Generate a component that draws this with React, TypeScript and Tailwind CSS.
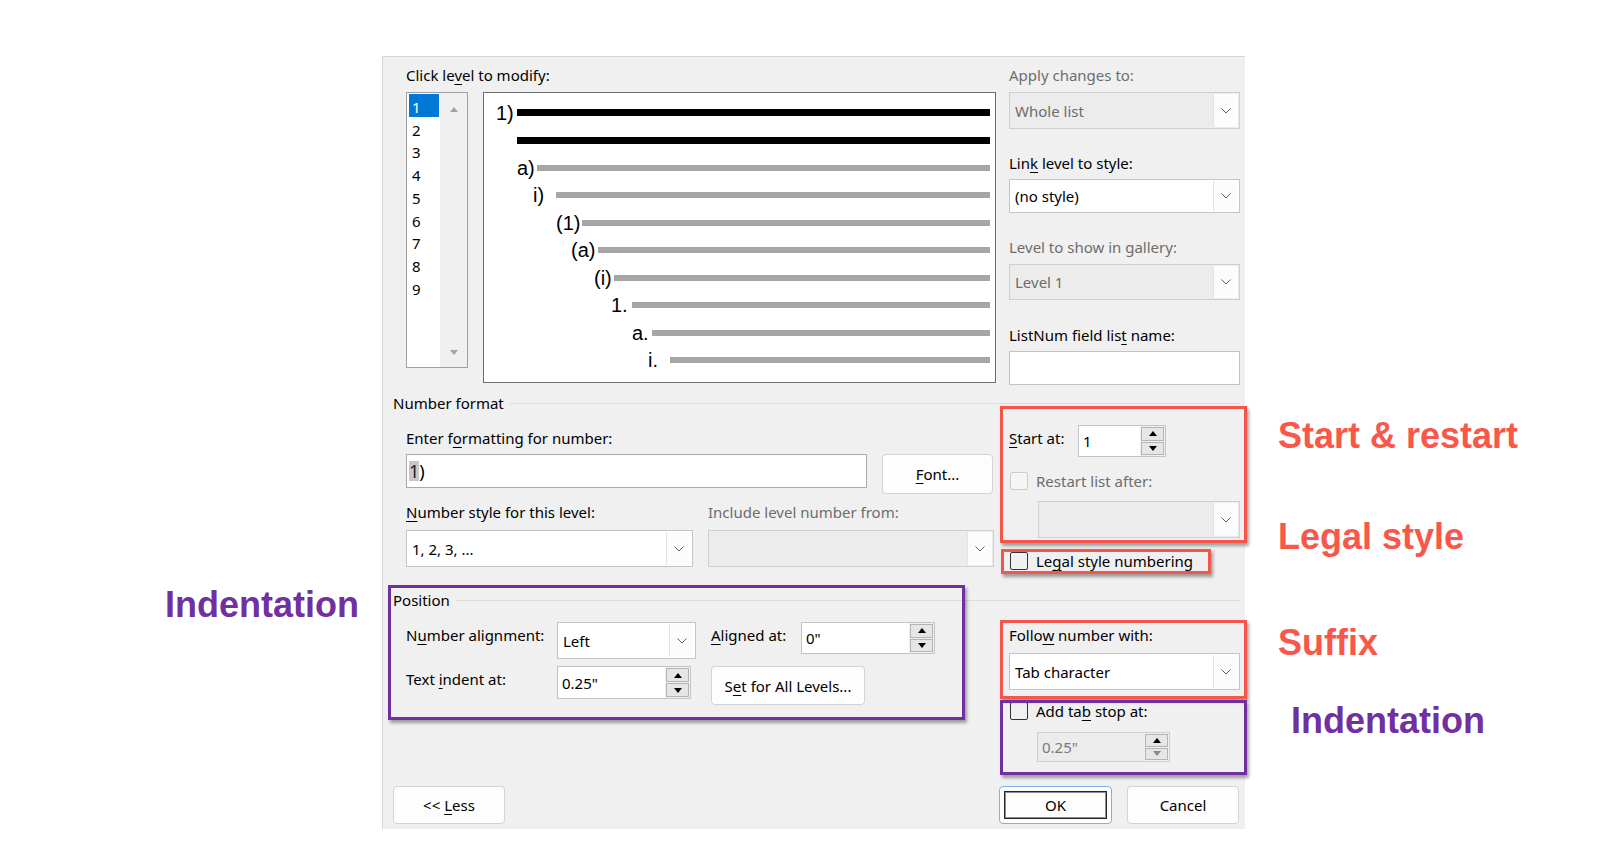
import React from "react";
import clsx from "clsx";

const Chevron = () => (
  <svg width="10" height="6" viewBox="0 0 10 6">
    <path d="M0.5 0.5L5 5L9.5 0.5" fill="none" stroke="#5f5f5f" strokeWidth="1" />
  </svg>
);

const Tri = ({ up, color = "#000" }: { up?: boolean; color?: string }) => (
  <svg width="8" height="5" viewBox="0 0 8 5">
    <path d={up ? "M0 5L4 0L8 5Z" : "M0 0L8 0L4 5Z"} fill={color} />
  </svg>
);

function U({ children }: { children: React.ReactNode }) {
  return <span className="underline underline-offset-[3px] decoration-1">{children}</span>;
}

function Combo({ text, disabled, className }: { text?: string; disabled?: boolean; className: string }) {
  return (
    <div
      className={clsx(
        "flex border",
        disabled ? "bg-[#ececec] border-[#cfcfcf] text-[#6d6d6d]" : "bg-white border-[#c4c4c4] text-black",
        className
      )}
    >
      <div className="flex-1 flex items-center pl-[5px] whitespace-nowrap overflow-hidden">{text}</div>
      <div className="w-[25px] my-px mr-px flex items-center justify-center bg-[#fcfcfc] border-l border-[#e3e3e3]">
        <Chevron />
      </div>
    </div>
  );
}

function Spin({ value, disabled, className }: { value: string; disabled?: boolean; className: string }) {
  return (
    <div
      className={clsx(
        "flex border",
        disabled ? "border-[#cfcfcf] bg-[#ececec] text-[#7a7a7a]" : "border-[#c4c4c4] bg-white text-black",
        className
      )}
    >
      <div className="flex-1 flex items-center pl-[4px] text-[15px]">{value}</div>
      <div className="w-[25px] flex flex-col gap-px p-px bg-[#f0f0f0]">
        <div className="flex-1 flex items-center justify-center border border-[#b4b4b4] bg-[#e6e6e6]">
          <Tri up />
        </div>
        <div className="flex-1 flex items-center justify-center border border-[#b4b4b4] bg-[#e6e6e6]">
          <Tri color={disabled ? "#8a8a8a" : "#000"} />
        </div>
      </div>
    </div>
  );
}

function Check({ disabled }: { disabled?: boolean }) {
  return (
    <span
      className={clsx(
        "block w-[18px] h-[18px] rounded-[2px] border shrink-0",
        disabled ? "border-[#cccccc] bg-[#f5f5f5]" : "border-[#333333] bg-[#f0f0f0]"
      )}
    />
  );
}

function Btn({ children, className }: { children: React.ReactNode; className: string }) {
  return (
    <div
      className={clsx(
        "flex items-center justify-center bg-[#fdfdfd] border border-[#d3d3d3] rounded-[4px]",
        className
      )}
    >
      {children}
    </div>
  );
}

function GroupHead({ label }: { label: string }) {
  return (
    <div className="pl-[11px] pr-[5px] flex items-center h-[20px]">
      <span>{label}</span>
      <div className="flex-1 h-px bg-[#dcdcdc] ml-[6px]" />
    </div>
  );
}

const rows = [
  { num: "1)", pl: "pl-[12px]", w: "w-[21px]", bar: "bg-black h-[7px]" },
  { num: "", pl: "pl-[33px]", w: "w-0", bar: "bg-black h-[7px]" },
  { num: "a)", pl: "pl-[33px]", w: "w-[20px]", bar: "bg-[#a6a6a6] h-[6px]" },
  { num: "i)", pl: "pl-[49px]", w: "w-[23px]", bar: "bg-[#a6a6a6] h-[6px]" },
  { num: "(1)", pl: "pl-[72px]", w: "w-[26px]", bar: "bg-[#a6a6a6] h-[6px]" },
  { num: "(a)", pl: "pl-[87px]", w: "w-[27px]", bar: "bg-[#a6a6a6] h-[6px]" },
  { num: "(i)", pl: "pl-[110px]", w: "w-[20px]", bar: "bg-[#a6a6a6] h-[6px]" },
  { num: "1.", pl: "pl-[127px]", w: "w-[21px]", bar: "bg-[#a6a6a6] h-[6px]" },
  { num: "a.", pl: "pl-[148px]", w: "w-[20px]", bar: "bg-[#a6a6a6] h-[6px]" },
  { num: "i.", pl: "pl-[164px]", w: "w-[22px]", bar: "bg-[#a6a6a6] h-[6px]" },
];

function LevelList() {
  return (
    <div className="w-[62px] h-[276px] border border-[#a0a0a0] bg-white flex">
      <div className="w-[33px] pt-px pl-[2px]">
        {[1, 2, 3, 4, 5, 6, 7, 8, 9].map((n) => (
          <div
            key={n}
            className={clsx(
              "h-[22.75px] w-[30px] flex items-center pl-[3px] pt-[3px]",
              n === 1 && "bg-[#0078d7] text-white"
            )}
          >
            {n}
          </div>
        ))}
      </div>
      <div className="flex-1 bg-[#f0f0f0] flex flex-col items-center justify-between pt-[14px] pb-[12px]">
        <Tri up color="#a3a3a3" />
        <Tri color="#a3a3a3" />
      </div>
    </div>
  );
}

function Preview() {
  return (
    <div className="w-[513px] h-[291px] border border-[#6e6e6e] bg-white pt-[6px] font-['Liberation_Sans',Arial,sans-serif] text-[20px]">
      {rows.map((r, i) => (
        <div key={i} className={clsx("h-[27.5px] flex items-center pr-[5px]", r.pl)}>
          <span className={clsx("shrink-0 whitespace-nowrap leading-none", r.w)}>{r.num}</span>
          <div className={clsx("flex-1", r.bar)} />
        </div>
      ))}
    </div>
  );
}

export default function App() {
  return (
    <div className="relative w-[1600px] h-[844px] bg-white overflow-hidden font-['Noto_Sans',sans-serif] text-[15px] leading-[20px] text-black">
      {/* dialog */}
      <div className="ml-[382px] mt-[56px] w-[863px] h-[773px] bg-[#f0f0f0] shadow-[inset_1px_1px_0_#d6d6d6]">
        {/* level list + preview + right column */}
        <div className="flex">
          <div className="pl-[24px] pt-[9px] w-[614px]">
            <div className="h-[20px]">
              Click le<U>v</U>el to modify:
            </div>
            <div className="mt-[7px] flex gap-[15px]">
              <LevelList />
              <Preview />
            </div>
          </div>
          <div className="ml-[13px] w-[231px] pt-[9px]">
            <div className="h-[20px] text-[#6d6d6d]">Apply changes to:</div>
            <Combo disabled text="Whole list" className="mt-[7px] h-[37px]" />
            <div className="mt-[24px] h-[20px]">
              Lin<U>k</U> level to style:
            </div>
            <Combo text="(no style)" className="mt-[6px] h-[34px]" />
            <div className="mt-[24px] h-[20px] text-[#6d6d6d]">Level to show in gallery:</div>
            <Combo disabled text="Level 1" className="mt-[7px] h-[36px]" />
            <div className="mt-[25px] h-[20px]">
              ListNum field lis<U>t</U> name:
            </div>
            <div className="mt-[6px] h-[34px] bg-white border border-[#c4c4c4]" />
          </div>
        </div>

        {/* number format */}
        <div className="mt-[8px]">
          <GroupHead label="Number format" />
        </div>
        <div className="flex">
          <div className="pl-[24px] w-[614px]">
            <div className="mt-[15px] h-[20px]">
              Enter f<U>o</U>rmatting for number:
            </div>
            <div className="mt-[6px] flex items-start gap-[15px]">
              <div className="w-[461px] h-[34px] bg-white border border-[#a9a9a9] flex items-center pl-[2px] text-[18px]">
                <span className="bg-[#c8c8c8] text-[#222]">1</span>
                <span>)</span>
              </div>
              <Btn className="w-[111px] h-[40px]">
                <span>
                  <U>F</U>ont...
                </span>
              </Btn>
            </div>
            <div className="mt-[8px] h-[20px] flex">
              <span className="w-[302px]">
                <U>N</U>umber style for this level:
              </span>
              <span className="text-[#6d6d6d]">Include level number from:</span>
            </div>
            <div className="mt-[8px] flex gap-[15px]">
              <Combo text="1, 2, 3, ..." className="w-[287px] h-[37px]" />
              <Combo disabled className="w-[286px] h-[37px]" />
            </div>
          </div>
          <div className="ml-[13px] w-[231px]">
            <div className="mt-[12px] h-[32px] flex items-start">
              <span className="w-[69px] pt-[3px]">
                <U>S</U>tart at:
              </span>
              <Spin value="1" className="w-[88px] h-[32px]" />
            </div>
            <div className="mt-[14px] h-[20px] flex items-center">
              <span className="ml-px flex">
                <Check disabled />
              </span>
              <span className="ml-[8px] text-[#6d6d6d]">Restart list after:</span>
            </div>
            <Combo disabled className="mt-[10px] ml-[29px] w-[202px] h-[37px]" />
            <div className="mt-[13px] h-[20px] flex items-center">
              <span className="ml-px flex">
                <Check />
              </span>
              <span className="ml-[8px]">
                Le<U>g</U>al style numbering
              </span>
            </div>
          </div>
        </div>

        {/* position */}
        <div className="mt-[19px]">
          <GroupHead label="Position" />
        </div>
        <div className="flex">
          <div className="pl-[24px] w-[614px]">
            <div className="mt-[12px] flex items-start">
              <span className="w-[151px] pt-[3px]">
                N<U>u</U>mber alignment:
              </span>
              <Combo text="Left" className="w-[139px] h-[37px]" />
              <span className="ml-[15px] w-[90px] pt-[3px]">
                <U>A</U>ligned at:
              </span>
              <Spin value={'0"'} className="w-[134px] h-[32px]" />
            </div>
            <div className="mt-[7px] flex items-start">
              <span className="w-[151px] pt-[3px]">
                Text <U>i</U>ndent at:
              </span>
              <Spin value={'0.25"'} className="w-[134px] h-[33px]" />
              <Btn className="ml-[20px] w-[154px] h-[39px]">
                <span>
                  S<U>e</U>t for All Levels...
                </span>
              </Btn>
            </div>
          </div>
          <div className="ml-[13px] w-[231px]">
            <div className="mt-[15px] h-[20px]">
              Follo<U>w</U> number with:
            </div>
            <Combo text="Tab character" className="mt-[8px] h-[37px]" />
            <div className="mt-[11px] h-[20px] flex items-center">
              <span className="ml-px flex">
                <Check />
              </span>
              <span className="ml-[8px]">
                Add ta<U>b</U> stop at:
              </span>
            </div>
            <Spin disabled value={'0.25"'} className="mt-[11px] ml-[28px] w-[133px] h-[30px]" />
          </div>
        </div>

        {/* buttons */}
        <div className="mt-[24px] flex">
          <Btn className="ml-[11px] w-[112px] h-[38px]">
            <span>
              &lt;&lt; <U>L</U>ess
            </span>
          </Btn>
          <div className="ml-[494px] w-[113px] h-[38px] rounded-[4px] border border-[#7fb3e6] bg-[#fdfdfd] p-[4px]">
            <div className="w-full h-full border border-[#262626] shadow-[inset_0_0_0_1px_#8f8f8f] flex items-center justify-center">
              OK
            </div>
          </div>
          <Btn className="ml-[15px] w-[112px] h-[38px]">Cancel</Btn>
        </div>
      </div>

      {/* annotation frames */}
      <div className="absolute left-[1000px] top-[406px] w-[247px] h-[137px] border-[3px] border-[#f4574a] shadow-[2px_3px_3px_rgba(0,0,0,0.35)]" />
      <div className="absolute left-[1001px] top-[549px] w-[210px] h-[25px] border-[3px] border-[#f4574a] shadow-[2px_3px_3px_rgba(0,0,0,0.35)]" />
      <div className="absolute left-[1000px] top-[620px] w-[247px] h-[79px] border-[3px] border-[#f4574a] shadow-[2px_3px_3px_rgba(0,0,0,0.35)]" />
      <div className="absolute left-[388px] top-[585px] w-[577px] h-[135px] border-[3px] border-[#7030a0] shadow-[2px_3px_3px_rgba(0,0,0,0.35)]" />
      <div className="absolute left-[1000px] top-[700px] w-[247px] h-[75px] border-[3px] border-[#7030a0] shadow-[2px_3px_3px_rgba(0,0,0,0.35)]" />

      {/* annotation labels */}
      <div className="absolute inset-0 pointer-events-none font-['Liberation_Sans',Arial,sans-serif] font-bold text-[36px] leading-[40px]">
        <div className="absolute left-[1278px] top-[416px] text-[#f9574a]">Start &amp; restart</div>
        <div className="absolute left-[1278px] top-[517px] text-[#f9574a]">Legal style</div>
        <div className="absolute left-[1278px] top-[623px] text-[#f9574a]">Suffix</div>
        <div className="absolute left-[1291px] top-[701px] text-[#7030a0]">Indentation</div>
        <div className="absolute left-[165px] top-[585px] text-[#7030a0]">Indentation</div>
      </div>
    </div>
  );
}
